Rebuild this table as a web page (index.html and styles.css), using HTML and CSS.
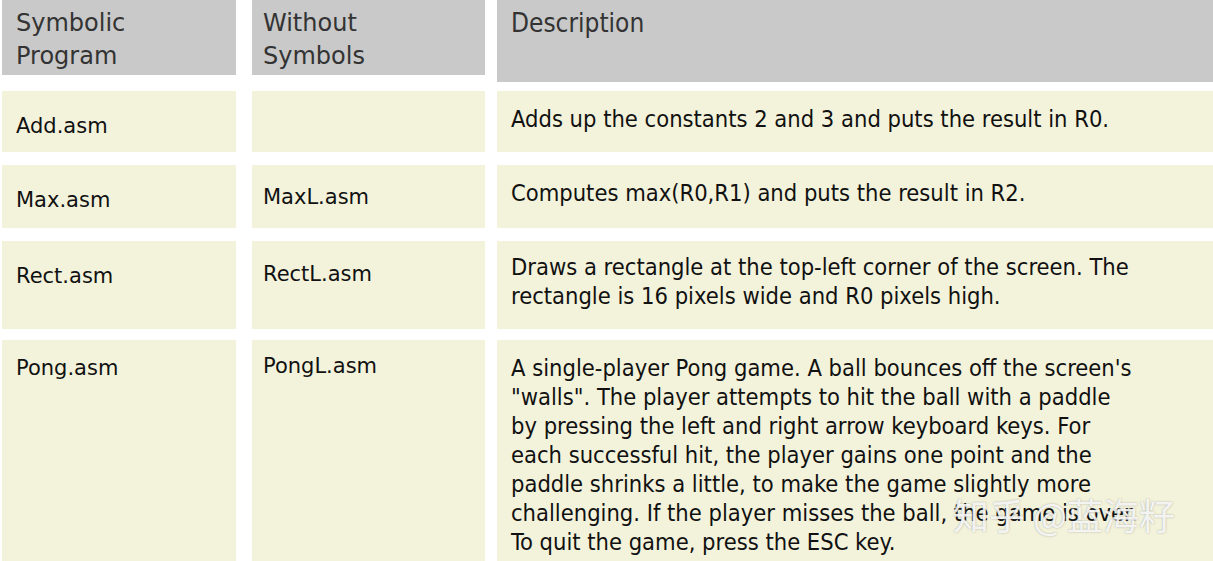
FILE: index.html
```html
<!DOCTYPE html>
<html>
<head>
<meta charset="utf-8">
<link rel="stylesheet" href="styles.css">
</head>
<body>
<div class="page">
  <div class="table">
    <div class="row head">
      <div class="cell h short">Symbolic<br>Program</div>
      <div class="cell h short c2">Without<br>Symbols</div>
      <div class="cell h desc">Description</div>
    </div>
    <div class="row r1">
      <div class="cell c1 p21">Add.asm</div>
      <div class="cell c2"></div>
      <div class="cell desc p14">Adds up the constants 2 and 3 and puts the result in R0.</div>
    </div>
    <div class="row r2">
      <div class="cell c1 p21">Max.asm</div>
      <div class="cell c2 p18">MaxL.asm</div>
      <div class="cell desc p14">Computes max(R0,R1) and puts the result in R2.</div>
    </div>
    <div class="row r3">
      <div class="cell c1 p21">Rect.asm</div>
      <div class="cell c2 p19">RectL.asm</div>
      <div class="cell desc p12">Draws a rectangle at the top-left corner of the screen. The rectangle is 16 pixels wide and R0 pixels high.</div>
    </div>
    <div class="row r4">
      <div class="cell c1 p14">Pong.asm</div>
      <div class="cell c2 p12">PongL.asm</div>
      <div class="cell desc p14">A single-player Pong game. A ball bounces off the screen's "walls". The player attempts to hit the ball with a paddle by pressing the left and right arrow keyboard keys. For each successful hit, the player gains one point and the paddle shrinks a little, to make the game slightly more challenging. If the player misses the ball, the game is over. To quit the game, press the ESC key.</div>
    </div>
  </div>
  <div class="watermark">知乎 @蓝海籽</div>
</div>
</body>
</html>
```

FILE: styles.css
```css
html, body {
  margin: 0;
  padding: 0;
  background: #ffffff;
  overflow: hidden;
}
.page {
  position: relative;
  width: 1213px;
  height: 561px;
  overflow: hidden;
}
.table {
  display: flex;
  flex-direction: column;
  padding-left: 2px;
}
.row {
  display: grid;
  grid-template-columns: 238px 233px 1fr;
  column-gap: 12px;
}
.head { height: 82px; margin-bottom: 9px; }
.r1 { height: 61px; margin-bottom: 13px; }
.r2 { height: 63px; margin-bottom: 13px; }
.r3 { height: 88px; margin-bottom: 11px; }
.r4 { height: 240px; }
.cell {
  background: #f3f3dc;
  color: #111111;
  font-family: "DejaVu Sans", Verdana, sans-serif;
  font-size: 21px;
  line-height: 29px;
  padding-left: 14px;
  box-sizing: border-box;
}
.row > .cell:first-child { margin-right: 4px; }
.c2 { padding-left: 11px; }
.h {
  background: #c9c9c9;
  color: #333333;
  font-size: 24px;
  line-height: 33px;
  padding-top: 7px;
}
.short { height: 75px; }
.head .c2 { padding-left: 11px; }
.desc {
  font-family: "DejaVu Sans Condensed", "DejaVu Sans", sans-serif;
  font-size: 23.5px;
  padding-left: 14px;
  padding-right: 72px;
}
.h.desc { font-size: 26px; }
.p12 { padding-top: 12px; }
.p14 { padding-top: 14px; }
.p18 { padding-top: 18px; }
.p19 { padding-top: 19px; }
.p21 { padding-top: 21px; }
.watermark {
  position: absolute;
  left: 953px;
  top: 488px;
  font-family: "Noto Sans CJK SC", sans-serif;
  font-size: 36px;
  color: rgba(255, 255, 255, 0.85);
  text-shadow: 0 0 2px rgba(120, 120, 120, 0.6);
}
```
